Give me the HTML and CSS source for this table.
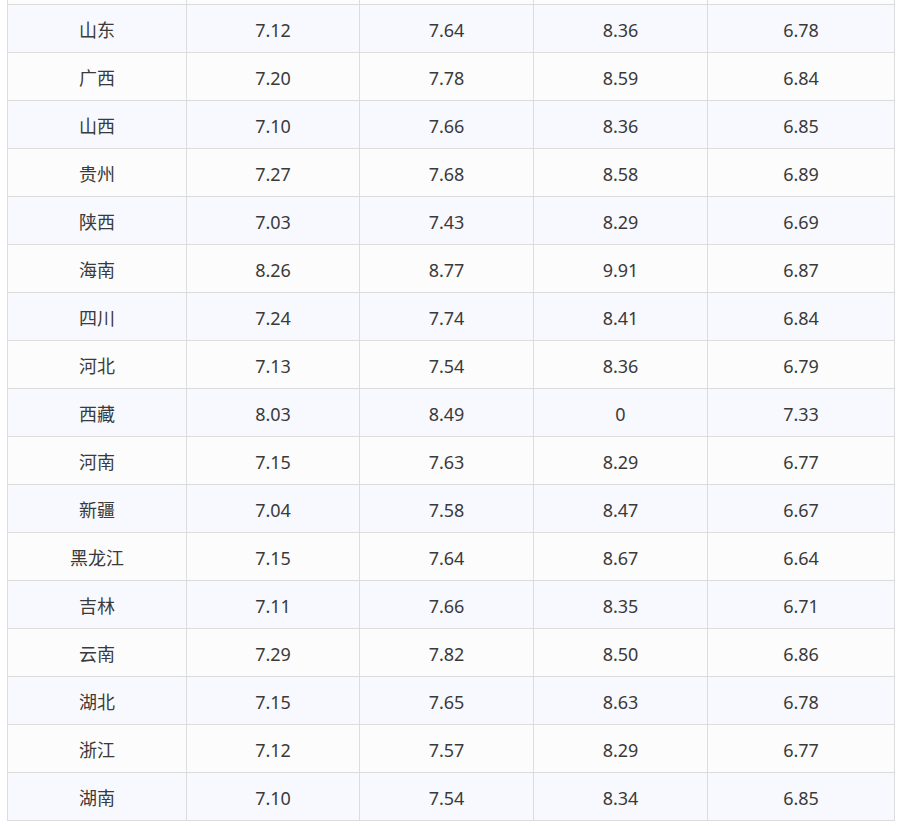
FILE: index.html
```html
<!DOCTYPE html>
<html lang="zh">
<head>
<meta charset="utf-8">
<link rel="stylesheet" href="styles.css">
</head>
<body>
<div class="wrap">
<table class="price">
<colgroup><col class="c1"><col class="c2"><col class="c3"><col class="c4"><col class="c5"></colgroup>
<tbody>
<tr class="prev"><td></td><td></td><td></td><td></td><td></td></tr>
<tr><td>山东</td><td>7.12</td><td>7.64</td><td>8.36</td><td>6.78</td></tr>
<tr><td>广西</td><td>7.20</td><td>7.78</td><td>8.59</td><td>6.84</td></tr>
<tr><td>山西</td><td>7.10</td><td>7.66</td><td>8.36</td><td>6.85</td></tr>
<tr><td>贵州</td><td>7.27</td><td>7.68</td><td>8.58</td><td>6.89</td></tr>
<tr><td>陕西</td><td>7.03</td><td>7.43</td><td>8.29</td><td>6.69</td></tr>
<tr><td>海南</td><td>8.26</td><td>8.77</td><td>9.91</td><td>6.87</td></tr>
<tr><td>四川</td><td>7.24</td><td>7.74</td><td>8.41</td><td>6.84</td></tr>
<tr><td>河北</td><td>7.13</td><td>7.54</td><td>8.36</td><td>6.79</td></tr>
<tr><td>西藏</td><td>8.03</td><td>8.49</td><td>0</td><td>7.33</td></tr>
<tr><td>河南</td><td>7.15</td><td>7.63</td><td>8.29</td><td>6.77</td></tr>
<tr><td>新疆</td><td>7.04</td><td>7.58</td><td>8.47</td><td>6.67</td></tr>
<tr><td>黑龙江</td><td>7.15</td><td>7.64</td><td>8.67</td><td>6.64</td></tr>
<tr><td>吉林</td><td>7.11</td><td>7.66</td><td>8.35</td><td>6.71</td></tr>
<tr><td>云南</td><td>7.29</td><td>7.82</td><td>8.50</td><td>6.86</td></tr>
<tr><td>湖北</td><td>7.15</td><td>7.65</td><td>8.63</td><td>6.78</td></tr>
<tr><td>浙江</td><td>7.12</td><td>7.57</td><td>8.29</td><td>6.77</td></tr>
<tr><td>湖南</td><td>7.10</td><td>7.54</td><td>8.34</td><td>6.85</td></tr>
</tbody>
</table>
</div>
</body>
</html>
```
FILE: styles.css
```css
html, body {
  margin: 0;
  padding: 0;
  background: #ffffff;
}
.wrap {
  padding-left: 7px;
  overflow: hidden;
  height: 828px;
}
.price {
  border-collapse: collapse;
  table-layout: fixed;
  width: 887px;
  margin-top: -44px;
  font-family: "Noto Sans", "Noto Sans CJK SC", sans-serif;
  font-size: 18px;
  color: #3a3a3a;
}
.c1 { width: 179px; }
.c2 { width: 173px; }
.c3 { width: 174px; }
.c4 { width: 174px; }
.c5 { width: 187px; }
.price td {
  border: 1px solid #dcdcdc;
  height: 45px;
  padding: 2px 0 0;
  text-align: center;
  vertical-align: middle;
  line-height: 20px;
}
.price tr:nth-child(even) td {
  background: #f8f9fe;
}
.price tr:nth-child(odd) td {
  background: #fcfcfc;
}
```
